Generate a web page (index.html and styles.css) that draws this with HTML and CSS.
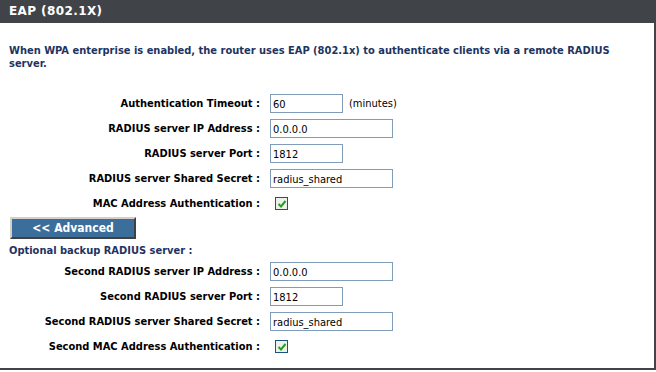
FILE: index.html
```html
<!DOCTYPE html>
<html lang="en">
	<head>
		<title>EAP (802.1X)</title>
		<meta charset="utf-8">
		<link rel="stylesheet" href="styles.css">
	</head>
	<body>
		<div id="box">
			<h2>EAP (802.1X)</h2>
			<p class="intro">When WPA enterprise is enabled, the router uses EAP (802.1x) to authenticate clients via a remote RADIUS server.</p>
			<div class="form">
				<label for="timeout">Authentication Timeout :</label>
				<div class="field"><input id="timeout" class="short" type="text" value="60"><span class="unit">(minutes)</span></div>
				<label for="ip">RADIUS server IP Address :</label>
				<div class="field"><input id="ip" class="long" type="text" value="0.0.0.0"></div>
				<label for="port">RADIUS server Port :</label>
				<div class="field"><input id="port" class="short" type="text" value="1812"></div>
				<label for="secret">RADIUS server Shared Secret :</label>
				<div class="field"><input id="secret" class="long" type="text" value="radius_shared"></div>
				<label>MAC Address Authentication :</label>
				<div class="field"><span class="check"><svg width="10" height="10" viewBox="0 0 10 10"><path d="M1.5 5 L4 7.5 L8.5 2" fill="none" stroke="#21a121" stroke-width="2"/></svg></span></div>
			</div>
			<div class="actions">
				<input type="button" class="btn" value="<< Advanced">
			</div>
			<h3>Optional backup RADIUS server :</h3>
			<div class="form">
				<label for="ip2">Second RADIUS server IP Address :</label>
				<div class="field"><input id="ip2" class="long" type="text" value="0.0.0.0"></div>
				<label for="port2">Second RADIUS server Port :</label>
				<div class="field"><input id="port2" class="short" type="text" value="1812"></div>
				<label for="secret2">Second RADIUS server Shared Secret :</label>
				<div class="field"><input id="secret2" class="long" type="text" value="radius_shared"></div>
				<label>Second MAC Address Authentication :</label>
				<div class="field"><span class="check"><svg width="10" height="10" viewBox="0 0 10 10"><path d="M1.5 5 L4 7.5 L8.5 2" fill="none" stroke="#21a121" stroke-width="2"/></svg></span></div>
			</div>
		</div>
	</body>
</html>
```

FILE: styles.css
```css
html, body {
	margin: 0;
	background-color: #FFFFFF;
}
body {
	font-family: 'DejaVu Sans Condensed', 'DejaVu Sans', sans-serif;
	font-size: 11px;
	color: #000000;
}
#box {
	width: 654px;
	height: 368px;
	border-right: 2px solid #404448;
	border-bottom: 2px solid #404448;
}
h2 {
	margin: 0;
	height: 23px;
	line-height: 23px;
	padding-left: 9px;
	background-color: #404448;
	color: #FFFFFF;
	font-family: 'DejaVu Sans', sans-serif;
	font-size: 12px;
	font-weight: bold;
	letter-spacing: 0.4px;
}
.intro {
	margin: 21px 40px 0 9px;
	color: #1D3461;
	font-weight: bold;
	line-height: 13px;
}
h3 {
	margin: 5px 0 0 9px;
	font-size: 11px;
	color: #1D3461;
	font-weight: bold;
	line-height: 14px;
}
.form {
	display: grid;
	grid-template-columns: 260px 1fr;
	column-gap: 10px;
	row-gap: 6px;
	margin-top: 24px;
}
h3 + .form {
	margin-top: 4px;
}
.form label {
	text-align: right;
	font-weight: bold;
	line-height: 19px;
}
.field {
	display: flex;
	align-items: center;
	height: 19px;
}
.field input {
	box-sizing: border-box;
	height: 19px;
	padding: 1px 2px 0;
	border: 1px solid #7F9DB9;
	font-family: 'DejaVu Sans Condensed', sans-serif;
	font-size: 11px;
	color: #000000;
	outline: none;
}
.short { width: 73px; }
.long { width: 123px; }
.unit {
	margin-left: 6px;
	color: #000000;
}
.check {
	box-sizing: border-box;
	display: flex;
	align-items: center;
	justify-content: center;
	width: 13px;
	height: 13px;
	margin-left: 5px;
	border: 1px solid #1C5180;
	background-color: #EEF0EA;
}
.actions {
	margin: 4px 0 0 10px;
}
.btn {
	box-sizing: border-box;
	display: block;
	width: 126px;
	height: 22px;
	padding: 0;
	border: 2px solid;
	border-color: #D4D0C8 #404040 #404040 #D4D0C8;
	background-color: #3C6E9C;
	color: #FFFFFF;
	font-family: 'DejaVu Sans Condensed', sans-serif;
	font-size: 12px;
	font-weight: bold;
}
```
